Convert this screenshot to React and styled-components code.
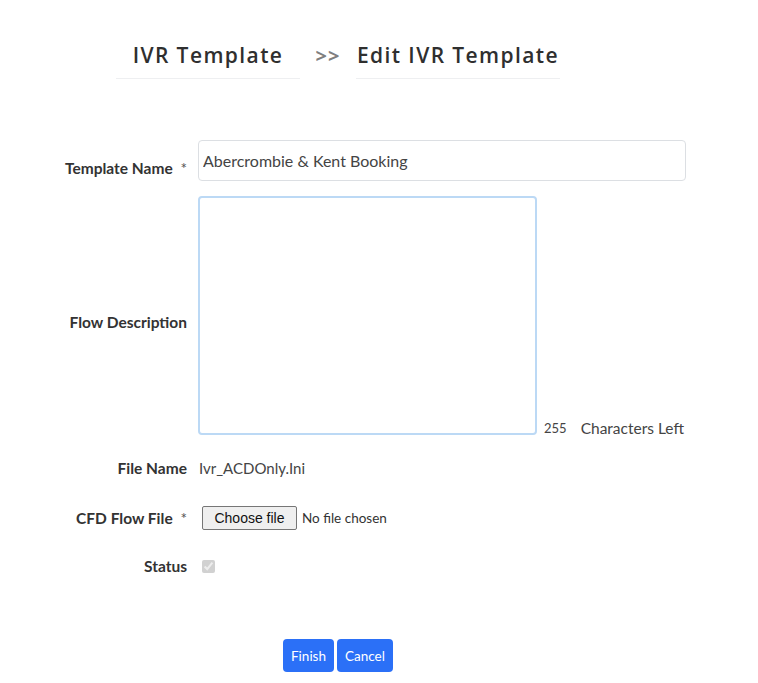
import React from "react";
import styled, { createGlobalStyle } from "styled-components";

const GlobalStyle = createGlobalStyle`
  body {
    margin: 0;
    background: #fff;
    font-family: Lato, "Open Sans", sans-serif;
    color: #333;
  }
`;

export default function App() {
  return (
    <>
      <GlobalStyle />
      <Page>
        <Breadcrumb>
          <Crumb width={184}>IVR Template</Crumb>
          <Separator>&gt;&gt;</Separator>
          <Crumb width={204}>Edit IVR Template</Crumb>
        </Breadcrumb>

        <Form>
          <Row height={41}>
            <Label offset={14}>
              Template Name <Star>&nbsp;*</Star>
            </Label>
            <TextInput defaultValue="Abercrombie & Kent Booking" />
          </Row>

          <Row height={239} top={15}>
            <Label offset={12}>Flow Description</Label>
            <AreaWrap>
              <TextArea />
              <Counter>255</Counter>
              <CounterText>Characters Left</CounterText>
            </AreaWrap>
          </Row>

          <Row height={30} top={18}>
            <Label>File Name</Label>
            <Value>Ivr_ACDOnly.Ini</Value>
          </Row>

          <Row height={30} top={20}>
            <Label>
              CFD Flow File <Star>&nbsp;*</Star>
            </Label>
            <FileField>
              <FileButton type="button">Choose file</FileButton>
              <FileStatus>No file chosen</FileStatus>
            </FileField>
          </Row>

          <Row height={30} top={18}>
            <Label>Status</Label>
            <CheckBox type="checkbox" defaultChecked disabled />
          </Row>
        </Form>

        <Actions>
          <Button>Finish</Button>
          <Button>Cancel</Button>
        </Actions>
      </Page>
    </>
  );
}

const Page = styled.div`
  width: 758px;
  padding-top: 36px;
`;

const Breadcrumb = styled.div`
  display: flex;
  align-items: flex-start;
  padding-left: 116px;
`;

const Crumb = styled.div`
  width: ${(p) => p.width}px;
  flex-shrink: 0;
  text-align: center;
  white-space: nowrap;
  font-family: "Open Sans", sans-serif;
  font-weight: 600;
  font-size: 21px;
  letter-spacing: 1.4px;
  color: #2f2f2f;
  line-height: 38px;
  padding-bottom: 4px;
  border-bottom: 1px solid #eeeff1;
`;

const Separator = styled.div`
  width: 56px;
  flex-shrink: 0;
  text-align: center;
  white-space: nowrap;
  font-family: "Open Sans", sans-serif;
  font-weight: 700;
  font-size: 20px;
  letter-spacing: 1px;
  color: #7f7f7f;
  line-height: 40px;
`;

const Form = styled.div`
  margin-top: 61px;
  display: flex;
  flex-direction: column;
`;

const Row = styled.div`
  display: flex;
  align-items: center;
  height: ${(p) => p.height}px;
  margin-top: ${(p) => p.top || 0}px;
`;

const Label = styled.div`
  width: 187px;
  text-align: right;
  padding-right: 11px;
  padding-top: ${(p) => p.offset || 0}px;
  box-sizing: content-box;
  font-weight: 700;
  font-size: 15.5px;
  color: #333;
  white-space: nowrap;
`;

const Star = styled.span`
  font-weight: 400;
  color: #555;
`;

const TextInput = styled.input`
  width: 488px;
  height: 41px;
  box-sizing: border-box;
  border: 1px solid #dcdfe3;
  border-radius: 4px;
  padding: 0 4px;
  font-family: Lato, sans-serif;
  font-size: 16px;
  color: #444;
  outline: none;
`;

const AreaWrap = styled.div`
  display: flex;
  align-items: flex-end;
`;

const TextArea = styled.textarea`
  width: 339px;
  height: 239px;
  box-sizing: border-box;
  border: 2px solid #bcd9f5;
  border-radius: 4px;
  resize: none;
  outline: none;
`;

const Counter = styled.span`
  font-size: 13px;
  color: #444;
  margin-left: 7px;
  margin-bottom: -1px;
`;

const CounterText = styled.span`
  font-size: 15.5px;
  color: #444;
  margin-left: 14px;
  margin-bottom: -2px;
`;

const Value = styled.span`
  font-size: 15px;
  color: #444;
  margin-left: 1px;
`;

const FileField = styled.div`
  display: flex;
  align-items: center;
  margin-left: 4px;
`;

const FileButton = styled.button`
  height: 24px;
  width: 95px;
  font-family: Arial, "Liberation Sans", sans-serif;
  font-size: 14px;
  color: #111;
  background: #efefef;
  border: 1px solid #767676;
  border-radius: 2px;
  padding: 0;
`;

const FileStatus = styled.span`
  font-size: 13.5px;
  color: #333;
  margin-left: 5px;
`;

const CheckBox = styled.input`
  width: 13px;
  height: 13px;
  margin: 0 0 0 4px;
  accent-color: #ccc;
`;

const Actions = styled.div`
  display: flex;
  gap: 3px;
  margin-top: 58px;
  padding-left: 283px;
`;

const Button = styled.button`
  height: 33px;
  padding: 0 8px;
  border: none;
  border-radius: 4px;
  background: #2b70f7;
  color: #fff;
  font-family: Lato, sans-serif;
  font-size: 13.5px;
`;
